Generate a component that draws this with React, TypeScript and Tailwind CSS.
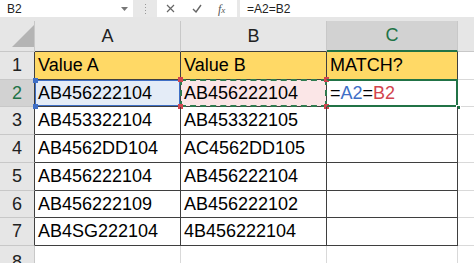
import React from 'react';

type Row = {
  n: number;
  a: string;
  b: string;
  h: string;
};

const rows: Row[] = [
  { n: 1, a: 'Value A', b: 'Value B', h: 'h-[28px]' },
  { n: 2, a: 'AB456222104', b: 'AB456222104', h: 'h-[27px]' },
  { n: 3, a: 'AB453322104', b: 'AB453322105', h: 'h-[28px]' },
  { n: 4, a: 'AB4562DD104', b: 'AC4562DD105', h: 'h-[28px]' },
  { n: 5, a: 'AB456222104', b: 'AB456222104', h: 'h-[28px]' },
  { n: 6, a: 'AB456222109', b: 'AB456222102', h: 'h-[27px]' },
  { n: 7, a: 'AB4SG222104', b: '4B456222104', h: 'h-[28px]' },
];

function Corner({ className }: { className: string }) {
  return <span className={`absolute h-[5px] w-[5px] ${className}`} />;
}

function FormulaBar() {
  return (
    <div className="flex h-[17px] bg-[#e8e8e8] text-[12px] text-[#222]">
      {/* Name box */}
      <div className="relative flex w-[133px] items-center bg-white pl-[7px]">
        B2
        <svg className="absolute right-[5px] top-[7px]" width="7" height="4" viewBox="0 0 7 4">
          <path d="M0 0h7L3.5 4z" fill="#777" />
        </svg>
      </div>
      {/* grip */}
      <div className="flex w-[24px] flex-col items-center justify-center gap-[2px]">
        {[0, 1, 2, 3].map((i) => (
          <span key={i} className="block h-[1px] w-[1px] bg-[#999]" />
        ))}
      </div>
      {/* cancel / enter / fx */}
      <div className="flex w-[80px] items-center bg-white">
        <svg className="ml-[9px]" width="9" height="9" viewBox="0 0 9 9">
          <path d="M1 1l7 7M8 1L1 8" stroke="#666" strokeWidth="1.2" />
        </svg>
        <svg className="ml-[17px]" width="10" height="9" viewBox="0 0 10 9">
          <path d="M1 5l3 3 5-7" stroke="#666" strokeWidth="1.4" fill="none" />
        </svg>
        <span className="ml-[16px] font-['Liberation_Serif',serif] text-[12px] italic text-[#555]">
          f<span className="text-[9px]">x</span>
        </span>
      </div>
      <div className="w-[3px]" />
      <div className="flex flex-1 items-center bg-white pl-[7px]">=A2=B2</div>
    </div>
  );
}

function HeaderRow() {
  return (
    <div className="flex h-[35px] bg-[#e6e6e6] pt-[4px] text-[18px] text-[#222]">
      <div className="relative w-[35px] border-b border-r border-[#c8c8c8]">
        <svg className="absolute left-[12px] top-[4px]" width="22" height="22" viewBox="0 0 22 22">
          <path d="M0 22H22V0z" fill="#b4b4b4" />
        </svg>
      </div>
      <div className="flex w-[146px] items-center justify-center border-b border-r border-b-[#3f3f3f] border-r-[#c8c8c8]">
        A
      </div>
      <div className="flex w-[146px] items-center justify-center border-b border-r border-b-[#3f3f3f] border-r-[#c8c8c8]">
        B
      </div>
      <div className="flex w-[131px] items-center justify-center border-b-2 border-r border-b-[#217346] border-r-[#c8c8c8] bg-[#d2d2d2] text-[#217346]">
        C
      </div>
      <div className="flex-1 border-b border-[#c8c8c8]" />
    </div>
  );
}

function DataRow({ row }: { row: Row }) {
  const header = row.n === 1;
  const active = row.n === 2;
  const cell = 'relative flex items-center pl-[3px] border-b border-r border-[#3f3f3f]';
  const fill = header ? 'bg-[#ffd966]' : '';

  return (
    <div className={`flex ${row.h} text-[18px] text-black`}>
      <div
        className={`flex w-[35px] items-center justify-center border-b border-r border-b-[#c8c8c8] border-r-[#3f3f3f] ${
          active ? 'bg-[#d2d2d2] text-[#217346]' : 'bg-[#e6e6e6] text-[#222]'
        }`}
      >
        {row.n}
      </div>

      <div className={`${cell} w-[146px] ${fill} ${active ? 'bg-[#e4ecf7]' : ''}`}>
        {active && (
          <>
            <span className="absolute inset-0 border border-[#3f6fc6]" />
            <Corner className="left-[-2px] top-[-2px] bg-[#3f6fc6]" />
            <Corner className="bottom-[-3px] left-[-2px] bg-[#3f6fc6]" />
          </>
        )}
        <span className="relative">{row.a}</span>
      </div>

      <div className={`${cell} w-[146px] ${fill} ${active ? 'bg-[#fbe6e7]' : ''}`}>
        {active && (
          <>
            <span className="absolute inset-[-1px] border-2 border-dashed border-[#2f7a4f]" />
            <Corner className="left-[-3px] top-[-3px] bg-[#d2444e]" />
            <Corner className="bottom-[-3px] left-[-3px] bg-[#d2444e]" />
            <Corner className="right-[-3px] top-[-3px] bg-[#d2444e]" />
            <Corner className="bottom-[-3px] right-[-3px] bg-[#d2444e]" />
          </>
        )}
        <span className="relative">{row.b}</span>
      </div>

      <div className={`${cell} w-[131px] ${fill}`}>
        {header && 'MATCH?'}
        {active && (
          <>
            <span className="absolute inset-[-1px] border-2 border-[#217346] border-l-transparent" />
            <span className="absolute bottom-[-4px] right-[-4px] h-[5px] w-[5px] border border-white bg-[#217346]" />
            <span className="relative">
              =<span className="text-[#3f6fc6]">A2</span>=<span className="text-[#d2444e]">B2</span>
            </span>
          </>
        )}
      </div>

      <div className="flex-1 border-b border-[#d9d9d9]" />
    </div>
  );
}

export default function App() {
  return (
    <div className="h-[263px] w-[474px] overflow-hidden bg-white font-['Liberation_Sans',sans-serif]">
      <FormulaBar />
      <HeaderRow />
      {rows.map((row) => (
        <DataRow key={row.n} row={row} />
      ))}
      <div className="flex h-[30px] text-[18px]">
        <div className="flex w-[35px] items-start justify-center border-r border-[#c8c8c8] bg-[#e6e6e6] pt-[3px] text-[#222]">
          8
        </div>
        <div className="w-[146px] border-r border-[#d9d9d9]" />
        <div className="w-[146px] border-r border-[#d9d9d9]" />
        <div className="w-[131px] border-r border-[#d9d9d9]" />
        <div className="flex-1" />
      </div>
    </div>
  );
}
